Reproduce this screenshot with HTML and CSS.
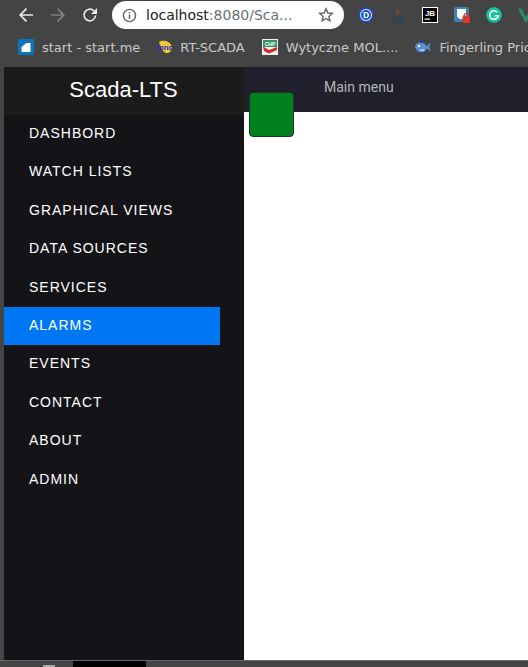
FILE: index.html
```html
<!DOCTYPE html>
<html lang="en">

<head>
    <meta charset="UTF-8">
    <title>Scada-LTS</title>
    <link rel="stylesheet" href="styles.css">
</head>

<body>
    <div class="chrome">
        <div class="toolbar">
            <svg class="nav-icon" viewBox="0 0 16 16"><path d="M15 8H2.500M8.500 1.700 2.200 8l6.300 6.300" fill="none" stroke="#e8eaed" stroke-width="1.700"/></svg>
            <svg class="nav-icon" viewBox="0 0 16 16"><path d="M1 8h12.500M7.500 1.700 13.800 8l-6.300 6.300" fill="none" stroke="#7d7f82" stroke-width="1.700"/></svg>
            <svg class="nav-icon" viewBox="0 0 16 16"><path d="M13.600 8.500a5.800 5.800 0 1 1-1.700-4.600" fill="none" stroke="#e8eaed" stroke-width="1.700"/><path d="M15 1v6h-6z" fill="#e8eaed"/></svg>
            <div class="address">
                <svg class="info" viewBox="0 0 16 16"><circle cx="8" cy="8" r="6.500" fill="none" stroke="#5f6368" stroke-width="1.500"/><path d="M7.200 7h1.600v4.500H7.200zM7.200 4.300h1.600v1.600H7.200z" fill="#5f6368"/></svg>
                <span class="url"><span class="host">localhost</span>:8080/Sca...</span>
                <svg class="star" viewBox="0 0 16 16"><path d="M8 1.800l1.800 4.200 4.500.4-3.400 3 1 4.400L8 11.500l-3.900 2.300 1-4.400-3.400-3 4.500-.4z" fill="none" stroke="#5f6368" stroke-width="1.400"/></svg>
            </div>
            <div class="extensions">
                <svg class="ext" viewBox="0 0 16 16"><circle cx="8" cy="8" r="7.500" fill="#1d50c8"/><circle cx="8" cy="8" r="6" fill="#dfe6f5"/><circle cx="8" cy="8" r="5" fill="#1d50c8"/><text x="8" y="11" class="ext-d">D</text></svg>
                <svg class="ext" viewBox="0 0 16 16"><path d="M3 9.500h9v3.500a2 2 0 0 1-2 2H5a2 2 0 0 1-2-2z" fill="#2c4656"/><path d="M1.500 14.500h12v1h-12z" fill="#2c4656"/><path d="M8.500 0c1 2.500-2.500 3.500-1.200 5.500.5.800 1.200 1.500 1 3-1.300-1-2.800-2-2.300-4C6.400 3 8.500 2 8.500 0z" fill="#a5492b"/><path d="M10 3c.5 1.500-1.500 2-.8 4-1-1-.8-3 .8-4z" fill="#a5492b"/></svg>
                <svg class="ext" viewBox="0 0 16 16"><rect x=".5" y=".5" width="15" height="15" fill="#000" stroke="#fff"/><text x="8" y="8.500" class="ext-jb">JB</text><path d="M2.500 11.500h5.500v1.200H2.500z" fill="#fff"/></svg>
                <svg class="ext" viewBox="0 0 16 16"><rect width="15" height="15" rx="2" fill="#3a82b8"/><path d="M3 2h9v6.500H9V12H5.500L3 9.500z" fill="#fff"/><rect x="8.500" y="9.500" width="7.500" height="6.500" rx=".8" fill="#d8392b"/><path d="M10.300 10V8.300a2 2 0 0 1 4 0V10" fill="none" stroke="#d8392b" stroke-width="1.200"/></svg>
                <svg class="ext" viewBox="0 0 16 16"><circle cx="8" cy="8" r="7.800" fill="#15c39a"/><path d="M11.300 5.200A4.300 4.300 0 1 0 12.300 8.800H8.500" fill="none" stroke="#fff" stroke-width="1.600"/></svg>
                <svg class="ext" viewBox="0 0 16 16"><path d="M0 1.500h3.500L8 10l4.500-8.500H16L9 15H7z" fill="#2b8a6b"/></svg>
            </div>
        </div>
        <div class="bookmarks">
            <span class="bookmark">
                <svg class="fav" viewBox="0 0 16 16"><rect width="16" height="16" fill="#0f73b8"/><path d="M3.500 8l5-4h4v9h-9z" fill="#fff"/></svg>
                start - start.me
            </span>
            <span class="bookmark bookmark-rt">
                <svg class="fav" viewBox="0 0 16 16"><path d="M2 3c4-2.500 10-1 12 2.500 1.500 3 .5 7.500-3 8.500C7 15 4 10 2 3z" fill="#ecc832"/><text x="7.800" y="10.500" class="fav-mnc">mnc</text></svg>
                RT-SCADA
            </span>
            <span class="bookmark">
                <svg class="fav" viewBox="0 0 16 16"><rect width="16" height="16" fill="#f2f2f2"/><path d="M1 1h14v7H1z" fill="#2f9264"/><path d="M1 7.500l6 3.500 8-3v3l-8 3.500L2 12z" fill="#cc2f2c"/><text x="8" y="7" class="fav-chp">CHP</text></svg>
                Wytyczne MOL....
            </span>
            <span class="bookmark">
                <svg class="fav" viewBox="0 0 16 16"><path d="M0 8c1-4 4-5.500 6.500-5C9.500 3.500 10.500 6 11.500 7L16 3.500 14.300 8l1.700 4.500-4.500-3c-1 2.500-3 4-5 4-3 0-5.500-2-6.500-5.500z" fill="#5a8ed2"/><path d="M3.500 3.500L7 0l2.500 4.500zM4 13l3 3 1.500-3z" fill="#2b3f8c"/><circle cx="4" cy="7" r="1.200" fill="#e8f0fa"/><path d="M5 10.500h4.500v1.200H5z" fill="#dbe6f5"/></svg>
                Fingerling Price
            </span>
        </div>
    </div>

    <div class="app">
        <aside class="sidebar">
            <div class="brand">Scada-LTS</div>
            <ul class="menu">
                <li>DASHBORD</li>
                <li>WATCH LISTS</li>
                <li>GRAPHICAL VIEWS</li>
                <li>DATA SOURCES</li>
                <li>SERVICES</li>
                <li class="active">ALARMS</li>
                <li>EVENTS</li>
                <li>CONTACT</li>
                <li>ABOUT</li>
                <li>ADMIN</li>
            </ul>
        </aside>
        <main class="content">
            <div class="topbar">Main menu</div>
            <div class="status-box"></div>
        </main>
    </div>

    <div class="bottom">
        <div class="taskbar-tab"></div>
        <div class="taskbar-item"></div>
    </div>
</body>

</html>
```

FILE: styles.css
```css
* {
    padding: 0;
    margin: 0;
    box-sizing: border-box;
}

html,
body {
    width: 528px;
    height: 667px;
    overflow: hidden;
}

body {
    display: flex;
    flex-direction: column;
    background-color: #444;
    font-family: "Liberation Sans", Arial, sans-serif;
}

.chrome {
    height: 67px;
    flex: none;
    overflow: hidden;
    background-color: #444;
    font-family: "DejaVu Sans", sans-serif;
}

.toolbar {
    height: 30px;
    display: flex;
    align-items: center;
    padding-left: 18px;
}

.nav-icon {
    width: 16px;
    height: 16px;
    margin-right: 16px;
    flex: none;
}

.address {
    width: 232px;
    height: 28px;
    margin-left: -2px;
    flex: none;
    display: flex;
    align-items: center;
    padding: 0 10px;
    background-color: #fff;
    border-radius: 14px;
}

.info {
    width: 15px;
    height: 15px;
    margin-right: 9px;
}

.url {
    flex: 1;
    font-size: 14px;
    color: #6b7075;
    white-space: nowrap;
}

.host {
    color: #202124;
}

.star {
    width: 16px;
    height: 16px;
}

.extensions {
    display: flex;
    align-items: center;
    gap: 16px;
    margin-left: 14px;
}

.ext {
    width: 16px;
    height: 16px;
    flex: none;
}

.ext-d {
    font: bold 8.500px "Liberation Sans", sans-serif;
    fill: #fff;
    text-anchor: middle;
}

.ext-jb {
    font: bold 8px "Liberation Sans", sans-serif;
    fill: #fff;
    text-anchor: middle;
}

.bookmarks {
    height: 34px;
    display: flex;
    align-items: center;
    padding-left: 18px;
    white-space: nowrap;
}

.bookmark {
    display: flex;
    align-items: center;
    gap: 8px;
    margin-right: 17px;
    font-size: 13px;
    color: #c8c9ca;
    flex: none;
}

.bookmark-rt {
    gap: 7px;
    margin-right: 17px;
}

.fav {
    width: 16px;
    height: 16px;
    flex: none;
}

.fav-mnc {
    font: bold 7.500px "Liberation Sans", sans-serif;
    fill: #1b22d9;
    text-anchor: middle;
}

.fav-chp {
    font: bold 5px "Liberation Sans", sans-serif;
    fill: #fff;
    text-anchor: middle;
}

.app {
    height: 593px;
    flex: none;
    display: flex;
    padding-left: 4px;
}

.sidebar {
    width: 240px;
    flex: none;
    background-color: #141418;
}

.brand {
    height: 48px;
    line-height: 46px;
    padding-right: 1px;
    text-align: center;
    font-size: 22px;
    color: #fff;
    background-color: #1b1b1b;
}

.menu {
    list-style: none;
}

.menu li {
    width: 216px;
    height: 38.4px;
    line-height: 37.4px;
    padding-left: 25px;
    font-size: 14px;
    letter-spacing: 1px;
    color: #fff;
}

.menu .active {
    background-color: #0077f2;
}

.content {
    flex: 1;
    position: relative;
    background-color: #fff;
}

.topbar {
    height: 45px;
    padding: 12px 0 0 80px;
    font-family: Roboto, sans-serif;
    font-size: 14px;
    color: #b5b5b8;
    background-color: #1f202b;
}

.status-box {
    position: absolute;
    left: 5px;
    top: 25px;
    width: 45px;
    height: 45px;
    background-color: #00801e;
    border: 1px solid #22332a;
    border-radius: 4px;
}

.bottom {
    flex: 1;
    display: flex;
    align-items: flex-end;
    padding-left: 43px;
    border-top: 1px solid #666;
}

.taskbar-tab {
    width: 12px;
    height: 2px;
    margin-right: 18px;
    background-color: #aaa;
}

.taskbar-item {
    width: 73px;
    height: 100%;
    background-color: #000;
}
```
